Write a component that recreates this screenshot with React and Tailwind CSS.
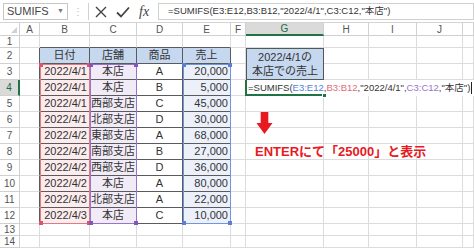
import React from 'react';

// grid placement classes, written out so tailwind picks them up
const COL = ['col-start-1', 'col-start-2', 'col-start-3', 'col-start-4', 'col-start-5', 'col-start-6', 'col-start-7', 'col-start-8', 'col-start-9', 'col-start-10', 'col-start-11', 'col-start-12'];
const ROW = ['row-start-1', 'row-start-2', 'row-start-3', 'row-start-4', 'row-start-5', 'row-start-6', 'row-start-7', 'row-start-8', 'row-start-9', 'row-start-10', 'row-start-11', 'row-start-12', 'row-start-13', 'row-start-14', 'row-start-15'];

const LETTERS = ['', 'A', 'B', 'C', 'D', 'E', 'F', 'G', 'H', 'I', 'J', ''];

const data = [
  ['2022/4/1', '本店', 'A', '20,000'],
  ['2022/4/1', '本店', 'B', '5,000'],
  ['2022/4/1', '西部支店', 'C', '45,000'],
  ['2022/4/1', '北部支店', 'D', '30,000'],
  ['2022/4/2', '東部支店', 'A', '68,000'],
  ['2022/4/2', '南部支店', 'B', '27,000'],
  ['2022/4/2', '西部支店', 'D', '36,000'],
  ['2022/4/2', '本店', 'A', '80,000'],
  ['2022/4/3', '北部支店', 'A', '22,000'],
  ['2022/4/3', '本店', 'C', '10,000'],
];
const heads = ['日付', '店舗', '商品', '売上'];
const fills = ['bg-[#fcecee]', 'bg-[#f1ebf7]', 'bg-white', 'bg-[#ebf0fa]'];
const aligns = ['justify-end pr-[2px]', 'justify-center', 'justify-center', 'justify-end pr-[2px]'];

function Cell({ r, c }) {
  // r: sheet row (0 = column header), c: grid column index (0 = row header)
  const place = `${COL[c]} ${ROW[r]}`;
  if (r === 0) {
    if (c === 0) {
      return (
        <div className={`${place} relative bg-white border-r border-b border-[#d0d0d0]`}>
          <div className="absolute right-[2px] bottom-[2px] w-0 h-0 border-l-[6px] border-l-transparent border-b-[6px] border-b-[#d0d0d0]" />
        </div>
      );
    }
    const sel = c === 7;
    return (
      <div className={`${place} flex items-center justify-center text-[10px] border-r border-[#d0d0d0] ${sel ? 'bg-[#dadada] text-[#1e6b3f] border-b-2 border-b-[#217346]' : 'bg-white text-[#555] border-b'}`}>
        {LETTERS[c]}
      </div>
    );
  }
  if (c === 0) {
    const sel = r === 4;
    return (
      <div className={`${place} flex items-center justify-center text-[10px] border-b border-[#d0d0d0] ${sel ? 'bg-[#dadada] text-[#1e6b3f] border-r-2 border-r-[#217346]' : 'bg-white text-[#555] border-r'}`}>
        {r}
      </div>
    );
  }
  const inTable = r >= 2 && r <= 12 && c >= 2 && c <= 5;
  if (inTable) {
    const k = c - 2;
    if (r === 2) {
      return (
        <div className={`${place} flex items-center justify-center bg-[#c6d8ef] border-r border-b border-[#5b5b5b] text-[11px] text-[#333]`}>
          {heads[k]}
        </div>
      );
    }
    return (
      <div className={`${place} flex items-center ${aligns[k]} ${fills[k]} border-r border-b border-[#5b5b5b] text-[11px] text-[#333]`}>
        {data[r - 3][k]}
      </div>
    );
  }
  // plain gridline cell; darken edges that touch the table
  const rightDark = c === 1 && r >= 2 && r <= 12;
  const bottomDark = r === 1 && c >= 2 && c <= 5;
  return (
    <div className={`${place} bg-white border-r border-b ${rightDark ? 'border-r-[#5b5b5b]' : 'border-r-[#dcdcdc]'} ${bottomDark ? 'border-b-[#5b5b5b]' : 'border-b-[#dcdcdc]'}`} />
  );
}

function Range({ place, color }) {
  const dot = `absolute w-[4px] h-[4px] ${color.dot}`;
  return (
    <div className={`${place} relative z-10 pointer-events-none border ${color.border}`}>
      <div className={`${dot} -left-[2px] -top-[2px]`} />
      <div className={`${dot} -right-[2px] -top-[2px]`} />
      <div className={`${dot} -left-[2px] -bottom-[2px]`} />
      <div className={`${dot} -right-[2px] -bottom-[2px]`} />
    </div>
  );
}

export default function App() {
  const cells = [];
  for (let r = 0; r <= 14; r++) {
    for (let c = 0; c < 12; c++) cells.push(<Cell key={`${r}-${c}`} r={r} c={c} />);
  }

  return (
    <div className="w-[474px] h-[248px] overflow-hidden bg-white font-['Liberation_Sans','Noto_Sans_CJK_JP',sans-serif]">
      {/* FORMULA BAR */}
      <div className="h-[23px] flex items-start pt-[3px] border-b border-[#d4d4d4] bg-white">
        <div className="ml-[3px] w-[65px] h-[17px] border border-[#c6c6c6] flex items-center justify-between px-[3px] text-[11px] text-[#444]">
          <span>SUMIFS</span>
          <span className="text-[7px] text-[#777]">▼</span>
        </div>
        <div className="w-[20px] h-[17px] flex items-center justify-center text-[10px] text-[#bbb]">⋮</div>
        <div className="w-[70px] h-[17px] border-l border-[#d0d0d0] flex items-center pl-[6px] gap-[9px]">
          <svg width="12" height="12" viewBox="0 0 12 12">
            <path d="M1 1 L11 11 M11 1 L1 11" stroke="#444" strokeWidth="1.4" fill="none" />
          </svg>
          <svg width="14" height="12" viewBox="0 0 14 12">
            <path d="M1 6.5 L5 10.5 L13 1.5" stroke="#444" strokeWidth="1.8" fill="none" />
          </svg>
          <span className="font-['Liberation_Serif',serif] italic text-[14px] text-[#444] leading-none">fx</span>
        </div>
        <div className="flex-1 h-[17px] border border-[#d0d0d0] flex items-center pl-[9px] text-[9.5px] text-[#333] whitespace-nowrap overflow-hidden">
          =SUMIFS(E3:E12,B3:B12,"2022/4/1",C3:C12,"本店")
        </div>
      </div>

      {/* SHEET */}
      <div className="grid grid-cols-[20px_20px_50px_47px_46px_48px_15px_78px_45px_48px_46px_11px] grid-rows-[13px_12px_repeat(11,16px)_12px_12px]">
        {cells}

        {/* highlighted reference ranges */}
        <Range place="col-start-3 row-start-4 row-span-10" color={{ border: 'border-[#e07a86]', dot: 'bg-[#d9566a]' }} />
        <Range place="col-start-4 row-start-4 row-span-10" color={{ border: 'border-[#9a72c9]', dot: 'bg-[#8456b8]' }} />
        <Range place="col-start-6 row-start-4 row-span-10" color={{ border: 'border-[#7196e0]', dot: 'bg-[#5a7fd3]' }} />

        {/* G2:G3 label box */}
        <div className="col-start-8 row-start-3 row-span-2 z-10 bg-[#c6d8ef] border border-[#4d5a55] flex flex-col items-center justify-center text-[11px] leading-[14px] text-[#333]">
          <span>2022/4/1の</span>
          <span>本店での売上</span>
        </div>

        {/* G4 in edit mode, text runs over H:K */}
        <div className="col-start-8 col-span-5 row-start-5 z-10 bg-white flex items-center pl-[2px] text-[9.5px] text-[#333] whitespace-nowrap overflow-visible">
          <span>=SUMIFS(</span>
          <span className="text-[#4f7fd8]">E3:E12</span>
          <span>,</span>
          <span className="text-[#df6b77]">B3:B12</span>
          <span>,"2022/4/1",</span>
          <span className="text-[#9a72c9]">C3:C12</span>
          <span>,"本店")</span>
          <span className="ml-[1px] w-px h-[12px] bg-[#222]" />
        </div>
        <div className="col-start-8 row-start-5 z-20 relative pointer-events-none border-l-2 border-b-2 border-[#217346] -ml-px">
          <div className="absolute -right-[3px] -bottom-[4px] w-[5px] h-[5px] bg-[#217346] border border-white" />
        </div>

        {/* arrow + note */}
        <div className="col-start-8 col-span-5 row-start-7 row-span-3 z-10 flex flex-col items-start pl-[9px] pointer-events-none">
          <svg width="19" height="26" viewBox="0 0 19 26">
            <path d="M5 0 H14 V13 H19 L9.5 26 L0 13 H5 Z" fill="#e8191f" />
          </svg>
          <span className="mt-[10px] text-[13px] leading-[16px] font-bold text-[#e8191f] whitespace-nowrap">
            ENTERにて「25000」と表示
          </span>
        </div>
      </div>
    </div>
  );
}
